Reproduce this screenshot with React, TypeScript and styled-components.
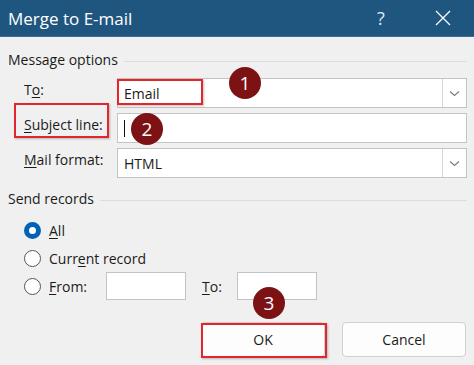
import React from "react";
import styled, { createGlobalStyle } from "styled-components";

const GlobalStyle = createGlobalStyle`
  html, body {
    margin: 0;
    padding: 0;
    background: #f0f0f0;
  }
  body {
    font-family: "Open Sans", "Noto Sans", sans-serif;
    color: #1b1b1b;
  }
`;

const Dialog = styled.div`
  position: relative;
  width: 474px;
  height: 365px;
  background: #f0f0f0;
  overflow: hidden;
`;

const TitleBar = styled.div`
  height: 36px;
  background: #1f5680;
  display: flex;
  align-items: center;
  padding-left: 8px;
  color: #ffffff;
  border-bottom: 1px solid #3d6f96;
`;

const Title = styled.span`
  font-size: 17px;
  flex: 1;
`;

const HelpGlyph = styled.span`
  font-size: 18px;
  width: 24px;
  text-align: center;
  margin-right: 38px;
  color: #dfe8f0;
`;

const CloseBox = styled.span`
  width: 24px;
  height: 24px;
  margin-right: 19px;
  display: flex;
  align-items: center;
  justify-content: center;
`;

const Body = styled.div`
  padding: 13px 7px 0 8px;
  display: flex;
  flex-direction: column;
`;

const GroupHeader = styled.div`
  display: flex;
  align-items: center;
  gap: 6px;
  font-size: 14px;
  line-height: 20px;
  height: 20px;
  &::after {
    content: "";
    flex: 1;
    border-top: 1px solid #dcdcdc;
    margin-top: 2px;
  }
`;

const Fields = styled.div`
  display: grid;
  grid-template-columns: 93px 1fr;
  row-gap: 5px;
  padding-left: 16px;
  margin-top: 8px;
  align-items: center;
`;

const Label = styled.label`
  font-size: 14px;
  height: 30px;
  line-height: 24px;
  align-self: start;
`;

const Key = styled.span`
  text-decoration: underline;
  text-underline-offset: 2px;
`;

const Box = styled.div`
  position: relative;
  height: 30px;
  box-sizing: border-box;
  background: #ffffff;
  border: 1px solid #c4c4c4;
  display: flex;
  align-items: center;
  font-size: 14px;
  padding-left: 6px;
`;

const Value = styled.span`
  flex: 1;
`;

const DropButton = styled.span`
  width: 23px;
  height: 100%;
  border-left: 1px solid #d6d6d6;
  display: flex;
  align-items: center;
  justify-content: center;
`;

const Caret = styled.span`
  width: 1px;
  height: 17px;
  background: #111;
`;

const RadioList = styled.div`
  display: flex;
  flex-direction: column;
  padding-left: 16px;
  margin-top: 7px;
`;

const RadioRow = styled.div`
  height: 28px;
  display: flex;
  align-items: center;
  font-size: 14px;
`;

const Radio = styled.span<{ $on?: boolean }>`
  width: 17px;
  height: 17px;
  box-sizing: border-box;
  border-radius: 50%;
  background: #fff;
  border: ${(p) => (p.$on ? "5px solid #0263b6" : "1px solid #555")};
  margin-right: 8px;
`;

const RadioText = styled.span<{ $w?: number }>`
  width: ${(p) => (p.$w ? `${p.$w}px` : "auto")};
`;

const SmallInput = styled.span`
  width: 80px;
  height: 28px;
  box-sizing: border-box;
  background: #fff;
  border: 1px solid #c4c4c4;
`;

const ToLabel = styled.span`
  margin-left: 16px;
  width: 35px;
`;

const Buttons = styled.div`
  display: flex;
  justify-content: flex-end;
  gap: 17px;
  margin-top: 22px;
  padding-right: 1px;
`;

const Button = styled.button`
  width: 124px;
  height: 35px;
  background: #fdfdfd;
  border: 1px solid #d0d0d0;
  border-radius: 4px;
  font-family: inherit;
  font-size: 14px;
  color: #1b1b1b;
  position: relative;
`;

const RedFrame = styled.span<{ $l: number; $t: number; $w: number; $h: number }>`
  position: absolute;
  left: ${(p) => p.$l}px;
  top: ${(p) => p.$t}px;
  width: ${(p) => p.$w}px;
  height: ${(p) => p.$h}px;
  box-sizing: border-box;
  border: 2px solid #e2262b;
  box-shadow: 1px 1px 2px rgba(0, 0, 0, 0.25);
  pointer-events: none;
`;

const Badge = styled.span<{ $x: number; $y: number }>`
  position: absolute;
  left: ${(p) => p.$x - 16}px;
  top: ${(p) => p.$y - 16}px;
  width: 32px;
  height: 32px;
  border-radius: 50%;
  background: #7c1214;
  color: #fff;
  font-size: 19px;
  display: flex;
  align-items: center;
  justify-content: center;
`;

const Chevron = () => (
  <svg width="11" height="7" viewBox="0 0 11 7">
    <path d="M1 1.5 L5.5 5.5 L10 1.5" fill="none" stroke="#7a7a7a" strokeWidth="1.1" />
  </svg>
);

const App = () => {
  return (
    <Dialog>
      <GlobalStyle />
      <TitleBar>
        <Title>Merge to E-mail</Title>
        <HelpGlyph>?</HelpGlyph>
        <CloseBox>
          <svg width="16" height="16" viewBox="0 0 16 16">
            <path d="M1 1 L15 15 M15 1 L1 15" stroke="#fff" strokeWidth="1.3" />
          </svg>
        </CloseBox>
      </TitleBar>
      <Body>
        <GroupHeader>Message options</GroupHeader>
        <Fields>
          <Label>
            T<Key>o</Key>:
          </Label>
          <Box>
            <Value>Email</Value>
            <DropButton>
              <Chevron />
            </DropButton>
          </Box>
          <Label>
            <Key>S</Key>ubject line:
          </Label>
          <Box>
            <Caret />
          </Box>
          <Label>
            <Key>M</Key>ail format:
          </Label>
          <Box>
            <Value>HTML</Value>
            <DropButton>
              <Chevron />
            </DropButton>
          </Box>
        </Fields>
        <GroupHeader style={{ marginTop: 11 }}>Send records</GroupHeader>
        <RadioList>
          <RadioRow>
            <Radio $on />
            <RadioText>
              <Key>A</Key>ll
            </RadioText>
          </RadioRow>
          <RadioRow>
            <Radio />
            <RadioText>
              Curr<Key>e</Key>nt record
            </RadioText>
          </RadioRow>
          <RadioRow>
            <Radio />
            <RadioText $w={57}>
              <Key>F</Key>rom:
            </RadioText>
            <SmallInput />
            <ToLabel>
              <Key>T</Key>o:
            </ToLabel>
            <SmallInput />
          </RadioRow>
        </RadioList>
        <Buttons>
          <Button>OK</Button>
          <Button>Cancel</Button>
        </Buttons>
      </Body>

      <RedFrame $l={117} $t={79} $w={86} $h={26} />
      <RedFrame $l={14} $t={103} $w={95} $h={35} />
      <RedFrame $l={201} $t={323} $w={126} $h={35} />
      <Badge $x={245} $y={83}>1</Badge>
      <Badge $x={147} $y={129}>2</Badge>
      <Badge $x={269} $y={303}>3</Badge>
    </Dialog>
  );
};

export default App;
